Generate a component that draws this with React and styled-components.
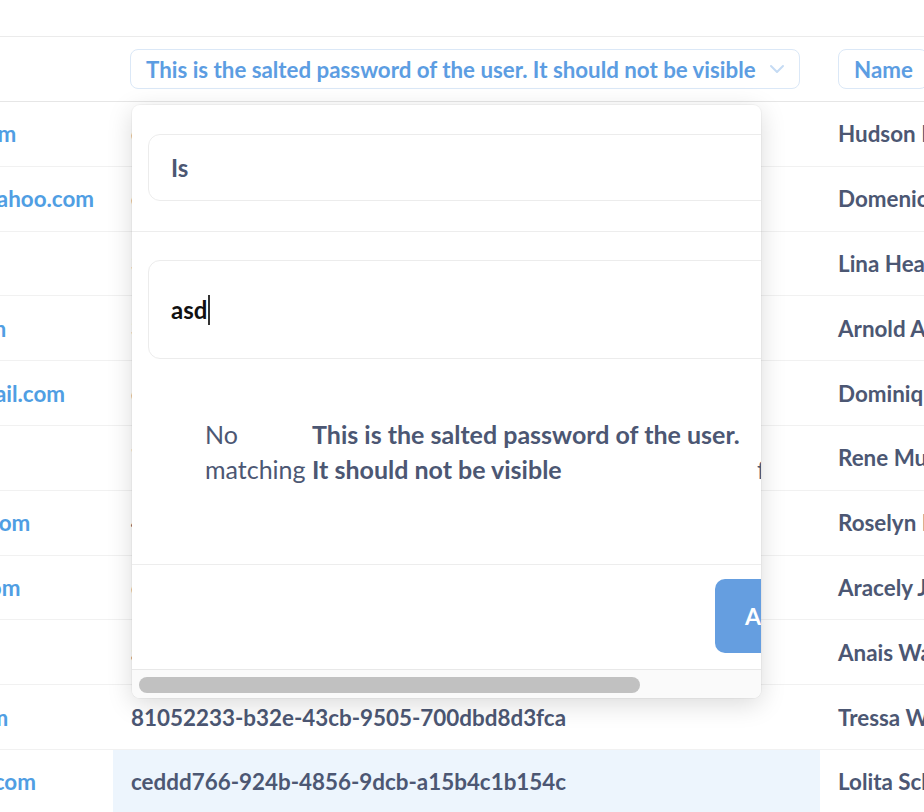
import React from 'react';
import styled, { createGlobalStyle } from 'styled-components';

const GlobalStyle = createGlobalStyle`
  body {
    margin: 0;
    font-family: Lato, "Noto Sans", sans-serif;
    background: #fff;
    color: #4c5773;
  }
`;

const Page = styled.div`
  position: relative;
  width: 924px;
  height: 812px;
  overflow: hidden;
  background: #fff;
`;

const TopBar = styled.div`
  height: 36px;
  border-bottom: 1px solid #ebebeb;
`;

const Viewport = styled.div`
  overflow: hidden;
`;

const Table = styled.div`
  display: grid;
  grid-template-columns: 300px 707px 400px;
  margin-left: -187px;
`;

const HeaderCell = styled.div`
  height: 64px;
  display: flex;
  align-items: center;
  padding: ${(p) => (p.$wide ? '0 20px 0 17px' : '0 18px')};
  border-bottom: 1px solid #e6e6e6;
`;

const Pill = styled.div`
  flex: ${(p) => (p.$grow ? 1 : 'none')};
  height: 38px;
  display: flex;
  align-items: center;
  justify-content: space-between;
  padding: 0 14px 0 15px;
  border: 1px solid #dbe8f7;
  border-radius: 8px;
  font-size: 22.3px;
  font-weight: 700;
  color: #5c9de2;
  white-space: nowrap;
`;

const Cell = styled.div`
  height: 63.8px;
  display: flex;
  align-items: center;
  padding-left: ${(p) => (p.$pad ? p.$pad : 17)}px;
  border-bottom: 1px solid #f1f1f1;
  background: ${(p) => (p.$hover ? '#edf5fd' : '#fff')};
  color: ${(p) => (p.$link ? '#509ee3' : '#4c5773')};
  font-size: 22.4px;
  font-weight: 700;
  white-space: nowrap;
  overflow: hidden;
`;

const Popover = styled.div`
  position: absolute;
  left: 132px;
  top: 105px;
  width: 629px;
  height: 593px;
  display: flex;
  flex-direction: column;
  background: #fff;
  border-radius: 8px;
  box-shadow: 0 6px 26px rgba(0, 0, 0, 0.15), 0 0 0 1px rgba(0, 0, 0, 0.03);
  overflow: hidden;
`;

const Clip = styled.div`
  flex: 1;
  overflow: hidden;
`;

const Content = styled.div`
  width: 768px;
  height: 100%;
  display: flex;
  flex-direction: column;
`;

const ScrollTrack = styled.div`
  height: 29px;
  padding: 7px;
  box-sizing: border-box;
  background: #fafafa;
  border-top: 1px solid #e8e8e8;
`;

const ScrollThumb = styled.div`
  width: 501px;
  height: 16px;
  border-radius: 8px;
  background: #c1c1c1;
`;

const Section = styled.div`
  padding: ${(p) => p.$pad};
  border-bottom: ${(p) => (p.$divided ? '1px solid #ededed' : 'none')};
  flex: ${(p) => (p.$fill ? 1 : 'none')};
  display: flex;
  flex-direction: column;
`;

const InputBox = styled.div`
  height: ${(p) => p.$h}px;
  box-sizing: border-box;
  display: flex;
  align-items: center;
  padding-left: 22px;
  border: 1px solid #ececec;
  border-radius: 12px;
  font-size: 24px;
  font-weight: 700;
  color: ${(p) => (p.$typed ? '#111' : '#4c5773')};
`;

const Caret = styled.span`
  display: inline-block;
  width: 2px;
  height: 30px;
  margin-left: 1px;
  background: #333;
`;

const Empty = styled.div`
  display: flex;
  align-items: flex-end;
  padding: 58px 0 0 57px;
  font-size: 25px;
  line-height: 35px;
`;

const EmptyPart = styled.span`
  flex: none;
  width: ${(p) => (p.$w ? `${p.$w}px` : 'auto')};
  font-weight: ${(p) => (p.$bold ? 700 : 400)};
  white-space: ${(p) => (p.$w ? 'normal' : 'nowrap')};
`;

const Footer = styled.div`
  display: flex;
  justify-content: flex-end;
  padding: 14px 16px 16px;
  border-top: 1px solid #ededed;
`;

const Button = styled.button`
  min-width: 169px;
  height: 74px;
  padding: 0 30px;
  border: none;
  border-radius: 10px;
  background: #659ee0;
  color: #fff;
  font-family: Lato, sans-serif;
  font-size: 23px;
  font-weight: 700;
  text-align: left;
`;

const Chevron = () => (
  <svg width="16" height="10" viewBox="0 0 16 10" fill="none">
    <polyline points="2,2 8,8 14,2" stroke="#c5dbf4" strokeWidth="2" strokeLinecap="round" strokeLinejoin="round" />
  </svg>
);

const people = [
  { email: 'hborer@gmail.com', uuid: 'c8f7a1e2-3b4d-4c1a-9f2e-6d1b8a4c7e90', name: 'Hudson Borer' },
  { email: 'domenica.will@yahoo.com', uuid: 'c1e5d3f7-8a2b-4d6e-b1c9-0f4a7e2d9b31', name: 'Domenica Williamson' },
  { email: 'lina@gmail.com', uuid: '3a9b7c2d-1e4f-4a8b-9c6d-5e2f1a0b3c47', name: 'Lina Heaney' },
  { email: 'arnold.a@aol.com', uuid: '3f2e1d0c-9b8a-4c7d-8e6f-1a2b3c4d5e6f', name: 'Arnold Adams' },
  { email: 'dominiques@gmail.com', uuid: 'c4d5e6f7-0a1b-4c2d-9e3f-4a5b6c7d8e9f', name: 'Dominique Leffler' },
  { email: 'rene@aol.com', uuid: '7e6d5c4b-3a29-4180-b7c6-d5e4f3a2b1c0', name: 'Rene Mueller' },
  { email: 'roselyn@yahoo.com', uuid: '4b3a2918-0f7e-4d6c-a5b4-c3d2e1f0a9b8', name: 'Roselyn Bosco' },
  { email: 'aracely@gmail.com', uuid: 'c9d8e7f6-5a4b-4c3d-8e2f-1a0b9c8d7e6f', name: 'Aracely Jenkins' },
  { email: 'anais@aol.com', uuid: 'a2b3c4d5-e6f7-4a8b-9c0d-1e2f3a4b5c6d', name: 'Anais Ward' },
  { email: 'tressa.w@aol.com', uuid: '81052233-b32e-43cb-9505-700dbd8d3fca', name: 'Tressa White' },
  { email: 'lolita.s@hotmail.com', uuid: 'ceddd766-924b-4856-9dcb-a15b4c1b154c', name: 'Lolita Schaefer' },
];

const COLUMN = 'This is the salted password of the user. It should not be visible';

export default function App() {
  return (
    <>
      <GlobalStyle />
      <Page>
        <TopBar />
        <Viewport>
          <Table>
            <HeaderCell />
            <HeaderCell $wide>
              <Pill $grow>
                <span>{COLUMN}</span>
                <Chevron />
              </Pill>
            </HeaderCell>
            <HeaderCell>
              <Pill>Name</Pill>
            </HeaderCell>
            {people.map((p, i) => (
              <React.Fragment key={p.uuid}>
                <Cell $link>{p.email}</Cell>
                <Cell $hover={i === people.length - 1} $pad={18}>{p.uuid}</Cell>
                <Cell $pad={18}>{p.name}</Cell>
              </React.Fragment>
            ))}
          </Table>
        </Viewport>

        <Popover>
          <Clip>
            <Content>
              <Section $pad="29px 16px 30px" $divided>
                <InputBox $h={67}>Is</InputBox>
              </Section>
              <Section $pad="28px 16px 0" $fill>
                <InputBox $h={99} $typed>
                  asd<Caret />
                </InputBox>
                <Empty>
                  <EmptyPart $w={107}>No matching</EmptyPart>
                  <EmptyPart $w={445} $bold>{COLUMN}</EmptyPart>
                  <EmptyPart>found.</EmptyPart>
                </Empty>
              </Section>
              <Footer>
                <Button>Add filter</Button>
              </Footer>
            </Content>
          </Clip>
          <ScrollTrack>
            <ScrollThumb />
          </ScrollTrack>
        </Popover>
      </Page>
    </>
  );
}
